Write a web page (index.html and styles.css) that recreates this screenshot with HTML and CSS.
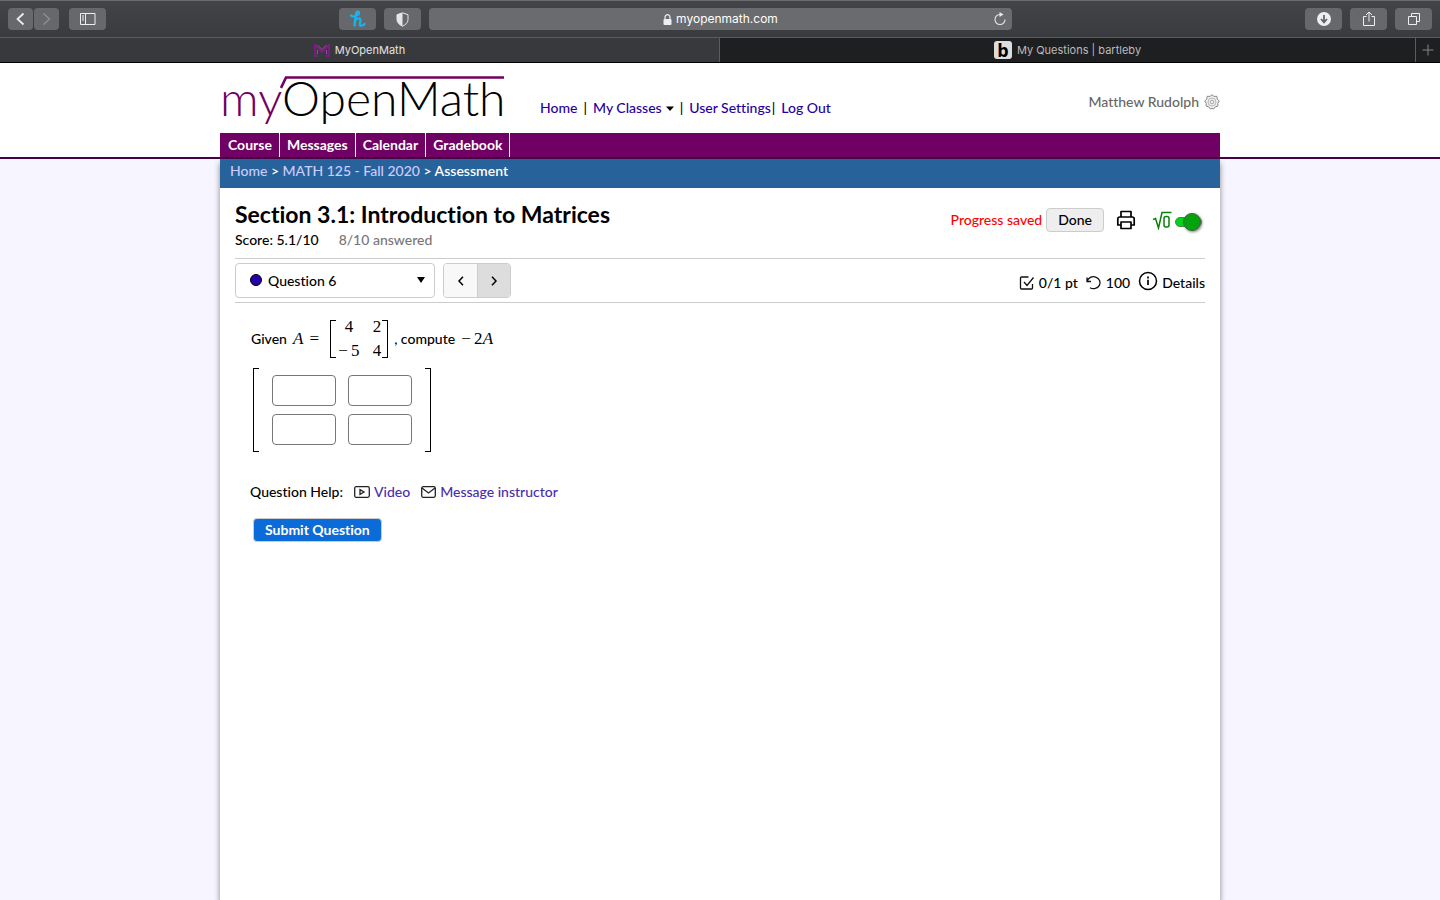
FILE: index.html
```html
<!DOCTYPE html>
<html lang="en">
<head>
<meta charset="utf-8">
<title>MyOpenMath</title>
<link rel="stylesheet" href="styles.css">
</head>
<body>
<div class="browser">
  <div class="toolbar">
    <div class="tools tools-left">
      <div class="nav-pair">
        <button class="tool narrow" aria-label="Back"><svg width="26" height="22" viewBox="0 0 26 22"><path d="M15.500 5.500 9.500 11l6 5.500" fill="none" stroke="#eee" stroke-width="1.700"/></svg></button>
        <button class="tool narrow" aria-label="Forward"><svg width="26" height="22" viewBox="0 0 26 22"><path d="M9.500 5.500l6 5.500-6 5.500" fill="none" stroke="#8c8d8f" stroke-width="1.500"/></svg></button>
      </div>
      <button class="tool" aria-label="Sidebar"><svg width="16" height="12" viewBox="0 0 16 12"><path d="M.5.5h14.500v11H.5zM5.500.5v11M2 3h2M2 5h2M2 7h2" fill="none" stroke="#eee"/></svg></button>
    </div>
    <div class="address-area">
      <button class="tool" aria-label="Honey"><svg width="18" height="18" viewBox="0 0 18 18"><path d="M2 5.500c.5 1.800 8 .5 8-2.500 0-2-2.500-1.700-3 .5L5.500 15.500M5.800 11.500c1-3 5.700-4.500 5.700-1.500 0 2-1.500 5-.2 5.500 1.500.5 3.200-.3 4.200-1.500" fill="none" stroke="#16b5ee" stroke-width="2.300" stroke-linecap="round"/></svg></button>
      <button class="tool" aria-label="Privacy report"><svg width="13" height="15" viewBox="0 0 13 15"><path d="M6.500.8 12 2.700v5c0 3-2.500 5-5.500 6.500C3.500 12.700 1 10.700 1 7.700v-5z" fill="none" stroke="#e6e6e6"/><path d="M6.500.8v13.400C3.500 12.700 1 10.700 1 7.700v-5z" fill="#e6e6e6"/></svg></button>
      <div class="address">
        <span class="host"><svg width="9" height="11" viewBox="0 0 9 11"><path d="M2 5V3.200a2.500 2.500 0 0 1 5 0V5" fill="none" stroke="#eee" stroke-width="1.200"/><rect x=".5" y="5" width="8" height="6" rx="1" fill="#eee"/></svg>myopenmath.com</span>
        <button class="reload" aria-label="Reload"><svg width="14" height="14" viewBox="0 0 14 14"><path d="M7 2.500A5 5 0 1 0 12 7.500" fill="none" stroke="#e8e8e8" stroke-width="1.100"/><path d="M6.500 0v5l4-2.500z" fill="#e8e8e8"/></svg></button>
      </div>
    </div>
    <div class="tools tools-right">
      <button class="tool" aria-label="Downloads"><svg width="16" height="16" viewBox="0 0 16 16"><circle cx="8" cy="8" r="7" fill="#eee"/><path d="M8 4v7M5 8l3 3.300L11 8" fill="none" stroke="#636467" stroke-width="1.800"/></svg></button>
      <button class="tool" aria-label="Share"><svg width="14" height="16" viewBox="0 0 14 16"><path d="M4.500 5.500h-3v9h11v-9h-3M7 10.500V1M4 4l3-3 3 3" fill="none" stroke="#eee"/></svg></button>
      <button class="tool" aria-label="Show tabs"><svg width="14" height="14" viewBox="0 0 14 14"><path d="M1.500 4.500h8v8h-8zM4.500 4V1.500h8v8H10" fill="none" stroke="#eee"/></svg></button>
    </div>
  </div>
  <div class="tabs">
    <button class="tab active"><svg width="16" height="13" viewBox="0 0 16 13"><path d="M4 12H1V1l7 7 7-7v11h-3" fill="none" stroke="#94119c" stroke-width="1.500"/><path d="M3.500 10V6M12.500 10V6M3.500 1l4.500 4.500L12.500 1" fill="none" stroke="#a05ca6" stroke-width=".8"/></svg>MyOpenMath</button>
    <button class="tab"><span class="b-icon">b</span>My Questions | bartleby</button>
    <button class="new-tab" aria-label="New tab"><svg width="12" height="12" viewBox="0 0 12 12"><path d="M6 .5v11M.5 6h11" stroke="#85868a"/></svg></button>
  </div>
</div>

<header class="site-header">
  <div class="wrap">
    <div class="masthead">
      <div class="logo"><span class="my">my</span>OpenMath<svg class="radical" width="226" height="14" viewBox="0 0 226 14"><path d="M1 13 6 2.500h218" fill="none" stroke="#700064" stroke-width="2.600"/></svg></div>
      <nav class="top-links">
        <a href="#">Home</a><span>|</span><a href="#">My Classes</a><svg class="caret" width="8" height="5" viewBox="0 0 8 5"><path d="M0 .5h8L4 5z"/></svg><span>|</span><a href="#">User Settings</a><span class="tight">|</span><a href="#">Log Out</a>
      </nav>
      <div class="user">Matthew Rudolph
        <svg width="16" height="16" viewBox="0 0 16 16" fill="none" stroke="#8b8b8b"><path d="M8 .7l2 1.700 2.900-.1.300 2.800 2.100 1.900-1.500 2.300.2 2.700-2.700.8L9.500 15 8 14.300 6.500 15l-1.800-2.200-2.700-.8.2-2.700L.7 7l2.100-1.900.3-2.800 2.900.1z" fill="#eee"/><circle cx="8" cy="8" r="4" stroke="#bbb"/><circle cx="8" cy="8" r="1.800" stroke="#aaa"/></svg>
      </div>
    </div>
    <nav class="course-nav"><a href="#">Course</a><a href="#">Messages</a><a href="#">Calendar</a><a href="#">Gradebook</a></nav>
  </div>
</header>

<main class="wrap page">
  <nav class="crumbs"><a href="#">Home</a> &gt; <a href="#">MATH 125 - Fall 2020</a> &gt; Assessment</nav>
  <div class="assessment">
    <div class="title-row">
      <div>
        <h1>Section 3.1: Introduction to Matrices</h1>
        <p class="score"><span>Score: 5.1/10</span><span class="muted">8/10 answered</span></p>
      </div>
      <div class="actions">
        <span class="saved">Progress saved</span>
        <button class="done">Done</button>
        <button class="print" aria-label="Print"><svg width="20" height="20" viewBox="0 0 20 20" fill="none" stroke="#000" stroke-width="1.700" stroke-linejoin="round"><path d="M5 7V1.500h10V7M5 15H1.800V9q0-2 2-2h12.400q2 0 2 2v6H15M5 12h10v6.500H5z"/></svg></button>
        <label class="editor-toggle"><svg width="19" height="19" viewBox="0 0 19 19" fill="none" stroke="#088008" stroke-width="1.500"><path d="M0 8.500l2.500-1L5.500 17 9 1.500h9.500"/><rect x="11" y="5.500" width="5" height="10.500" rx="2"/></svg><input type="checkbox" checked aria-label="Equation editor"></label>
      </div>
    </div>
    <div class="question-bar">
      <div class="picker"><span class="dot"></span><select aria-label="Question"><option>Question 6</option></select><svg width="8" height="6" viewBox="0 0 8 6"><path d="M0 0h8L4 6z"/></svg></div>
      <div class="pager">
        <button aria-label="Previous question"><svg width="8" height="10" viewBox="0 0 8 10"><path d="M6 .7 2 5l4 4.300" fill="none" stroke="#000" stroke-width="1.500"/></svg></button>
        <button class="next" aria-label="Next question"><svg width="8" height="10" viewBox="0 0 8 10"><path d="M2 .7 6 5 2 9.300" fill="none" stroke="#000" stroke-width="1.500"/></svg></button>
      </div>
      <div class="facts">
        <span><svg width="16" height="16" viewBox="0 0 16 16" fill="none" stroke="#111" stroke-width="1.300"><path d="M9.500 2H2.500q-1 0-1 1v10q0 1 1 1h10q1 0 1-1V9M5 7l3 3.500 6.500-8"/></svg>0/1 pt</span>
        <span><svg width="16" height="16" viewBox="0 0 16 16" fill="none" stroke="#111" stroke-width="1.300"><path d="M1 2.500v4h4M1.200 6.300A6.500 6 0 1 1 4 12.700"/></svg>100</span>
        <button class="details"><svg width="20" height="20" viewBox="0 0 20 20" fill="none" stroke="#000" stroke-width="1.500"><circle cx="10" cy="10" r="8.500"/><path d="M10 8.800V14M10 5.500v2" stroke-width="1.700"/></svg>Details</button>
      </div>
    </div>
    <div class="question">
      <div class="prompt">
        <span>Given</span><span class="math"><i>A</i> <span class="eq">=</span></span>
        <table class="matrix"><tr><td>4</td><td>2</td></tr><tr><td>&minus;&#8201;5</td><td>4</td></tr></table>
        <span class="rest">, compute</span><span class="math">&minus;&#8201;2<i>A</i></span>
      </div>
      <div class="answer">
        <input type="text" aria-label="Row 1, column 1"><input type="text" aria-label="Row 1, column 2">
        <input type="text" aria-label="Row 2, column 1"><input type="text" aria-label="Row 2, column 2">
      </div>
      <div class="help"><span>Question Help:</span>
        <a href="#"><svg width="16" height="12" viewBox="0 0 16 12" fill="none" stroke="#222" stroke-width="1.300"><rect x=".7" y=".7" width="14.600" height="10.600" rx="1.500"/><path d="M6 3.700v4.600L10 6z"/></svg>Video</a>
        <a href="#"><svg width="15" height="12" viewBox="0 0 15 12" fill="none" stroke="#222" stroke-width="1.300"><rect x=".7" y=".7" width="13.600" height="10.600" rx="1.500"/><path d="M1 2l6.500 5L14 2"/></svg>Message instructor</a>
      </div>
      <button class="submit">Submit Question</button>
    </div>
  </div>
</main>
</body>
</html>
```
FILE: styles.css
```css
* { box-sizing: border-box; }
body {
  margin: 0;
  min-height: 100vh;
  display: flex;
  flex-direction: column;
  background: #f7f5ff;
  color: #000;
  font: 500 14px/20px "Trebuchet MS", Lato, sans-serif;
  font-variant-ligatures: none;
}
button, input, select { font: inherit; font-variant-ligatures: none; color: inherit; }
button { border: 0; background: none; padding: 0; }
svg { display: block; flex: none; }
a { color: #2600a0; text-decoration: none; }

/* Browser chrome */
.browser { background: #3d3e42; border-bottom: 1px solid #000; font: 12px/16px Inter, sans-serif; color: #eee; }
.toolbar {
  display: grid;
  grid-template-columns: 331fr minmax(0, 673px) 420fr;
  height: 38px;
  padding: 0 8px;
  align-items: center;
  border-top: 1px solid #6a6b6e;
  border-bottom: 1px solid #5b5c5f;
  background: linear-gradient(#434448, #3a3b3f);
}
.tools, .address-area { display: flex; gap: 8px; }
.tools-left { gap: 10px; }
.tools-right { justify-content: flex-end; }
.nav-pair { display: flex; gap: 1px; }
.tool {
  width: 37px;
  height: 22px;
  display: grid;
  place-items: center;
  border-radius: 4px;
  background: #67686b;
}
.tool.narrow { width: 25px; }
.address {
  flex: 1;
  display: flex;
  align-items: center;
  padding: 0 5px;
  border-radius: 4px;
  background: #6a6b6e;
  color: #fff;
}
.host { flex: 1; display: flex; align-items: center; justify-content: center; gap: 4px; padding-left: 14px; }
.tabs { display: flex; height: 24px; background: #1e1f21; font-size: 11px; }
.tab { flex: 1; display: flex; align-items: center; justify-content: center; gap: 5px; color: #bbb; }
.tab.active { flex: 0 0 50%; background: #38393c; color: #e4e4e4; border-right: 1px solid #5b5c5f; }
.b-icon {
  width: 18px;
  height: 18px;
  border-radius: 3px;
  background: #ddd;
  color: #000;
  font: 700 18px/18px "Open Sans", sans-serif;
}
.new-tab { width: 25px; display: grid; place-items: center; border-left: 1px solid #5b5c5f; }

/* Site header */
.wrap { width: 100%; max-width: 1000px; margin: 0 auto; }
.site-header { background: #fff; border-bottom: 2px solid #480044; }
.masthead { display: flex; height: 70px; }
.logo { position: relative; width: 286px; font: 300 48px/70px Lato, sans-serif; }
.my { color: #700064; }
.radical { position: absolute; left: 60px; top: 12px; }
.top-links { display: flex; align-items: center; margin: 20px 0 0 34px; gap: 6px; }
.caret { margin-left: -2px; }
.tight { margin-left: -5px; }
.user { display: flex; align-items: center; gap: 5px; margin: 0 0 0 auto; padding-top: 8px; color: #666; }
.course-nav { display: flex; padding-left: 1px; background: #700064; }
.course-nav a { padding: 2px 7px; border-right: 1px solid #fff; color: #fff; font-weight: 700; }

/* Assessment page */
.page { flex: 1; background: #fff; box-shadow: 0 4px 6px #888; clip-path: inset(0 -10px); }
.crumbs { background: #28629b; color: #fff; padding: 2px 10px 7px; font-weight: 600; }
.crumbs a { color: #ccccff; font-weight: 500; }
.assessment { padding: 12px 15px; }
.title-row { display: flex; justify-content: space-between; padding-bottom: 8px; }
h1 { margin: 0 0 2px; font-size: 23px; line-height: 28px; font-weight: 700; }
.score { display: flex; gap: 20px; margin: 0; }
.muted { color: #777; }
.actions { display: flex; align-items: center; height: 40px; }
.saved { color: #f00; }
.done { height: 24px; margin-left: 4px; padding: 0 11px; border: 1px solid #ccc; border-radius: 4px; background: #eee; }
.print { margin-left: 12px; }
.editor-toggle { display: flex; align-items: center; gap: 3px; margin: 0 3px 0 17px; }
.editor-toggle input {
  appearance: none;
  width: 27px;
  height: 10px;
  margin: 4px 0 0;
  display: flex;
  align-items: center;
  justify-content: flex-end;
  border: 1px solid #48854b;
  border-radius: 5px;
  background: #00d618;
}
.editor-toggle input::before {
  content: "";
  flex: none;
  width: 16px;
  height: 16px;
  border: 1px solid #356b38;
  border-radius: 50%;
  background: #02a30c;
  box-shadow: 1px 1px 3px #777;
}
.question-bar { display: flex; gap: 8px; padding: 4px 0; border: solid #ccc; border-width: 1px 0; }
.picker { position: relative; width: 200px; height: 35px; }
.picker select { appearance: none; width: 100%; height: 100%; padding: 0 32px; border: 1px solid #ccc; border-radius: 4px; background: #fff; }
.dot { position: absolute; left: 15px; top: 11px; width: 12px; height: 12px; border: 1px solid #000; border-radius: 50%; background: #2600a8; }
.picker svg { position: absolute; right: 10px; top: 14px; }
.pager { display: flex; border: 1px solid #ccc; border-radius: 4px; overflow: hidden; }
.pager button { width: 33px; display: grid; place-items: center; background: #f8f8f8; }
.pager .next { background: #ddd; border-left: 1px solid #ccc; }
.facts { display: flex; align-items: center; gap: 8px; margin-left: auto; padding-top: 4px; }
.facts span, .details { display: flex; align-items: center; gap: 4px; }
.details svg { margin-bottom: 4px; }
.question { padding: 15px; display: flex; flex-direction: column; align-items: flex-start; }
.prompt { display: flex; align-items: center; height: 42px; padding-left: 1px; }
.math, .matrix { font: 17px/22px "Liberation Serif", serif; }
.math { margin-left: 6px; }
.eq { margin-left: 2px; }
.matrix { position: relative; margin-left: 11px; border-collapse: collapse; text-align: center; }
.matrix td { height: 24px; padding: 0 6px 0 8px; line-height: 20px; }
.matrix td + td { padding: 0 7px 0 7px; }
.matrix::before, .matrix::after, .answer::before, .answer::after {
  content: "";
  position: absolute;
  top: 0;
  bottom: 0;
  left: 0;
  width: 5px;
  border: 1px solid #000;
  border-right: 0;
}
.matrix::before, .matrix::after { top: 5px; bottom: 5px; }
.matrix::after, .answer::after { left: auto; right: 0; border-right: 1px solid #000; border-left: 0; }
.rest { margin-left: 6px; }
.answer { position: relative; display: grid; grid-template-columns: 64px 64px; gap: 8px 12px; margin: 8px 0 0 3px; padding: 7px 19px; }
.answer input { width: 64px; height: 31px; padding: 4px; border: 1px solid #777; border-radius: 4px; }
.help { display: flex; gap: 11px; margin-top: 30px; }
.help a { display: flex; align-items: center; gap: 4px; color: #4a2cae; }
.submit { margin: 16px 0 0 3px; padding: 0 11px; border: 1px solid #ccc; border-radius: 4px; background: #0b6bd8; color: #fff; font-weight: 700; line-height: 22px; }
```
